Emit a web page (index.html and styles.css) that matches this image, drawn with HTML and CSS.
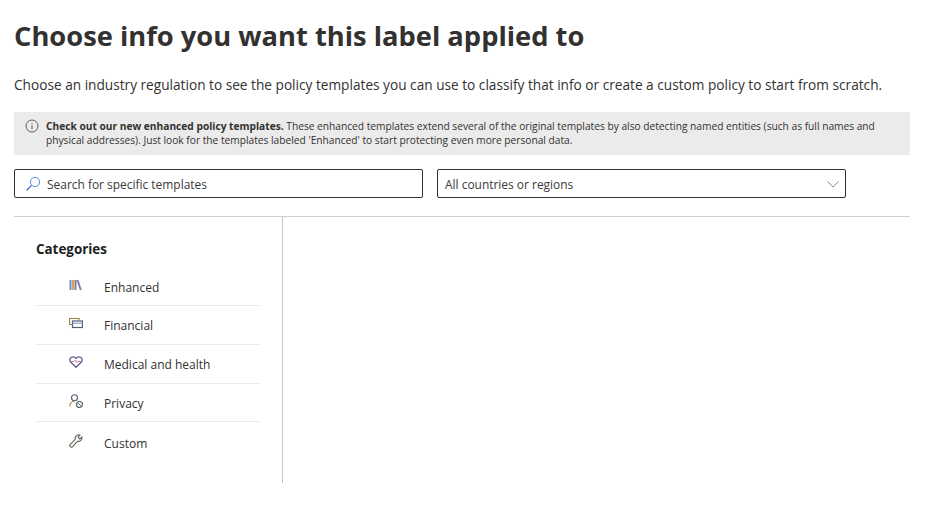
FILE: index.html
```html
<!DOCTYPE html>
<html lang="en">
<head>
<meta charset="utf-8">
<title>Choose info</title>
<link rel="stylesheet" href="styles.css">
</head>
<body>
<main class="page">
  <h1 class="title">Choose info you want this label applied to</h1>
  <p class="intro">Choose an industry regulation to see the policy templates you can use to classify that info or create a custom policy to start from scratch.</p>
  <div class="notice">
    <svg class="notice-icon" viewBox="0 0 14 14" width="14" height="14"><circle cx="7" cy="7" r="6" fill="none" stroke="#605e5c"/><path d="M7 6v4.200M7 3.800v1.100" stroke="#605e5c" fill="none"/></svg>
    <p class="notice-text"><strong>Check out our new enhanced policy templates.</strong> These enhanced templates extend several of the original templates by also detecting named entities (such as full names and physical addresses). Just look for the templates labeled 'Enhanced' to start protecting even more personal data.</p>
  </div>
  <div class="filters">
    <div class="field search">
      <svg class="search-icon" viewBox="0 0 16 16" width="16" height="16"><circle cx="10" cy="6" r="4.600" fill="none" stroke="#5b8ae6"/><path d="M6.600 9.400 1.500 14.500" stroke="#3a66c8" stroke-width="1.200" fill="none"/></svg>
      <span>Search for specific templates</span>
    </div>
    <div class="field select">
      <span>All countries or regions</span>
      <svg class="chevron" viewBox="0 0 12 7" width="12" height="7"><path d="M.5.500 6 6l5.500-5.500" fill="none" stroke="#8a8886"/></svg>
    </div>
  </div>
  <div class="content">
    <nav class="sidebar">
      <h2 class="cat-title">Categories</h2>
      <ul class="cat-list">
        <li class="cat cat-1">
          <svg class="cat-icon" viewBox="0 0 14 12" width="14" height="12"><path d="M1.500 1v10" stroke="#6f8fc8" stroke-width="2"/><path d="M4 1v10" stroke="#e0a050" stroke-width="2"/><path d="M6.500 1v10" stroke="#6f8098" stroke-width="2"/><path d="M8.500 1l3.300 10" stroke="#8a78b0" stroke-width="2"/></svg>
          <span>Enhanced</span>
        </li>
        <li class="cat cat-2">
          <svg class="cat-icon" viewBox="0 0 14 12" width="14" height="12"><path d="M3 7.500H.5V1.500h9.500v2" fill="none" stroke="#a08040" stroke-width="1.200"/><rect x="3.500" y="4" width="10" height="6.500" fill="#fff" stroke="#55606e" stroke-width="1.200"/><path d="M3.500 6.200h10" stroke="#6f8fc8"/></svg>
          <span>Financial</span>
        </li>
        <li class="cat cat-3">
          <svg class="cat-icon" viewBox="0 0 14 12" width="14" height="12"><path d="M7 11.300 1.600 6C.2 4.500.6 2 2.400 1.200 4 .5 6 1 7 2.400 8 1 10 .5 11.600 1.200 13.400 2 13.800 4.500 12.400 6z" fill="none" stroke="#56568e" stroke-width="1.200"/><path d="M2.500 5.500h2.700l1.300-1.500 1.500 2.500 1-1h2.500" fill="none" stroke="#c07a90"/></svg>
          <span>Medical and health</span>
        </li>
        <li class="cat cat-4">
          <svg class="cat-icon" viewBox="0 0 14 14" width="14" height="14"><circle cx="5.500" cy="3.800" r="3" fill="none" stroke="#55606e" stroke-width="1.100"/><path d="M.7 12.500c0-3 2-5.200 4.800-5.200" fill="none" stroke="#b08a48" stroke-width="1.100"/><circle cx="10.500" cy="10.500" r="3" fill="none" stroke="#55606e" stroke-width="1.100"/><path d="M8.500 8.500l4 4" stroke="#55606e"/></svg>
          <span>Privacy</span>
        </li>
        <li class="cat cat-5">
          <svg class="cat-icon" viewBox="0 0 14 14" width="14" height="14"><path d="M.9 10.800 6.200 5.300C5.800 2.800 7.400.8 10 .8l1 .300L9 3.200l1.800 1.800 2.100-2c.5 2.600-1.700 4.700-4.400 4.300l-5.100 5.500c-1.300 1.100-3.400-.7-2.500-2z" fill="none" stroke="#6b6256" stroke-width="1.100"/></svg>
          <span>Custom</span>
        </li>
      </ul>
    </nav>
    <section class="panel"></section>
  </div>
</main>
</body>
</html>
```

FILE: styles.css
```css
* { box-sizing: border-box; }
html, body { margin: 0; padding: 0; background: #fff; }
body { font-family: "Open Sans", "Noto Sans", sans-serif; color: #323130; overflow: hidden; }
.page { width: 896px; margin-left: 14px; padding-top: 18px; }
.title { margin: 0; font-size: 27.300px; line-height: 36px; font-weight: 700; color: #323130; }
.intro { margin: 22px 0 0; font-size: 13.670px; line-height: 18px; color: #323130; white-space: nowrap; }
.notice { display: flex; margin-top: 18px; height: 43px; background: #ebebeb; padding: 7px 10px 0 11px; }
.notice-icon { flex: none; margin-right: 7px; }
.notice-text { margin: 0; font-size: 10.200px; line-height: 14px; color: #323130; }
.notice-text strong { font-weight: 700; }
.filters { display: flex; gap: 14px; margin-top: 14px; padding-bottom: 18px; border-bottom: 1px solid #d2d0ce; }
.field { display: flex; align-items: center; height: 29px; border: 1px solid #323130; border-radius: 2px; font-size: 11.950px; color: #3b3a39; padding-top: 1px; }
.search { width: 409px; padding-left: 10px; }
.search-icon { margin-right: 6px; }
.select { width: 409px; padding: 1px 6px 0 7px; justify-content: space-between; }
.content { display: flex; height: 266px; }
.sidebar { width: 269px; border-right: 1px solid #c8c6c4; padding: 23px 0 0 22px; }
.cat-title { margin: 0; font-size: 13.400px; line-height: 18px; font-weight: 700; color: #201f1e; }
.cat-list { list-style: none; margin: 9px 0 0; padding: 0; width: 225px; }
.cat { display: flex; align-items: center; height: 39px; border-bottom: 1px solid #edebe9; font-size: 12px; color: #323130; padding-left: 33px; }
.cat-1 { padding-top: 2px; }
.cat-4 { height: 38px; padding-top: 1px; }
.cat-5 { border-bottom: none; padding-top: 3px; }
.cat-icon { flex: none; width: 14px; margin-right: 21px; position: relative; top: -2px; }
.panel { flex: 1; }
```
